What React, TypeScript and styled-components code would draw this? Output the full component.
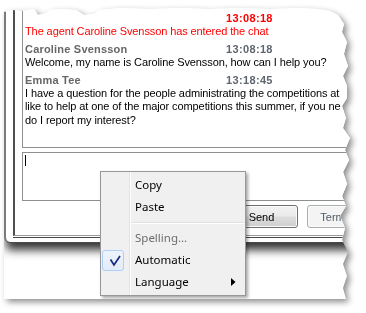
import React from "react";
import styled, { createGlobalStyle } from "styled-components";

const Global = createGlobalStyle`
  html, body { margin: 0; padding: 0; background: #ffffff; }
  body {
    width: 366px; height: 313px; overflow: hidden;
    font-family: "Liberation Sans", Arial, sans-serif;
  }
`;

const Stage = styled.div`
  width: 366px;
  height: 313px;
  background: #ffffff;
`;

const PaperShadow = styled.div`
  width: 356px;
  height: 304px;
  filter: drop-shadow(3px 3px 3px rgba(0, 0, 0, 0.45));
`;

const TORN = [
  "4px 12px", "12px 10px", "22px 11px", "34px 9px", "38px 15px", "46px 13px", "50px 10px",
  "62px 9px", "76px 10px", "84px 15px", "94px 14px", "99px 10px", "120px 8px", "150px 9px",
  "180px 8px", "210px 9px", "240px 8px", "270px 9px", "300px 8px", "318px 9px", "330px 11px",
  "338px 15px", "344px 24px", "342px 32px", "347px 42px", "344px 54px", "348px 66px",
  "343px 76px", "347px 86px", "347px 98px", "342px 106px", "346px 118px", "343px 128px",
  "350px 138px", "345px 150px", "349px 160px", "343px 172px", "347px 184px", "342px 196px",
  "346px 206px", "340px 216px", "345px 228px", "342px 240px", "348px 252px", "343px 264px",
  "347px 276px", "343px 288px", "346px 299px", "4px 299px",
].join(", ");

const Paper = styled.div`
  position: relative;
  box-sizing: border-box;
  width: 352px;
  height: 302px;
  padding-left: 4px;
  background: #ffffff;
  overflow: hidden;
  clip-path: polygon(${TORN});
`;

const Window = styled.div`
  box-sizing: border-box;
  width: 392px;
  margin-top: -8px;
  padding: 0 7px 6px 7px;
  border-left: 2px solid #7a7a7a;
  border-bottom: 1px solid #4a4a4a;
  border-bottom-left-radius: 6px;
  background: #ffffff;
  box-shadow: 0 9px 10px -2px rgba(0, 0, 0, 0.8);
`;

const InnerFrame = styled.div`
  display: flex;
  flex-direction: column;
  padding: 0 7px 7px 7px;
  border-left: 2px solid #4e4e4e;
  border-bottom: 1px solid #9a9a9a;
  box-shadow: 0 1px 0 #ffffff, 0 2px 0 #4a4a4a;
`;

const ChatPanel = styled.div`
  box-sizing: border-box;
  height: 156px;
  padding: 18.5px 2px 0 2px;
  border: 1px solid #8e8f8f;
  overflow: hidden;
  font-size: 11px;
  color: #000000;
`;

const Entry = styled.div`
  margin-bottom: 4.5px;
`;

const Header = styled.div`
  display: grid;
  grid-template-columns: 201px auto;
  height: 13px;
  line-height: 13px;
  font-weight: bold;
`;

const Name = styled.span`
  color: #666666;
  letter-spacing: 0.2px;
`;

const Time = styled.span<{ $system?: boolean }>`
  color: ${(p) => (p.$system ? "#ff0000" : "#5f6670")};
  letter-spacing: 0.35px;
`;

const Line = styled.div<{ $system?: boolean }>`
  height: 13.5px;
  line-height: 13.5px;
  white-space: nowrap;
  letter-spacing: -0.1px;
  color: ${(p) => (p.$system ? "#ff0000" : "#000000")};
`;

const Input = styled.div`
  box-sizing: border-box;
  height: 49px;
  margin-top: 4px;
  padding: 2px 2px;
  border: 1px solid #8e8f8f;
  background: #ffffff;
`;

const Caret = styled.span`
  display: block;
  width: 1px;
  height: 11px;
  background: #000000;
`;

const ButtonRow = styled.div`
  display: flex;
  justify-content: flex-end;
  gap: 9px;
  margin-top: 4px;
`;

const Button = styled.div<{ $disabled?: boolean; $w: number }>`
  box-sizing: border-box;
  width: ${(p) => p.$w}px;
  height: 23px;
  display: flex;
  align-items: center;
  justify-content: center;
  border-radius: 3px;
  font-size: 11px;
  border: 1px solid ${(p) => (p.$disabled ? "#a9aeb1" : "#707070")};
  color: ${(p) => (p.$disabled ? "#505a66" : "#000000")};
  background: ${(p) =>
    p.$disabled
      ? "#f4f4f4"
      : "linear-gradient(#f2f2f2 0%, #ebebeb 48%, #dddddd 52%, #cfcfcf 100%)"};
  box-shadow: inset 0 0 0 1px ${(p) => (p.$disabled ? "#fafafa" : "#fbfbfb")};
`;

const Menu = styled.div`
  position: absolute;
  left: 100px;
  top: 171px;
  box-sizing: border-box;
  width: 146px;
  padding: 2px 0;
  border: 1px solid #979797;
  background: linear-gradient(
    to right,
    #f0f0f0 28px,
    #e2e3e3 28px,
    #e2e3e3 29px,
    #ffffff 29px,
    #ffffff 30px,
    #f0f0f0 30px
  );
  box-shadow: 2px 2px 3px rgba(0, 0, 0, 0.35);
  font-family: "Noto Sans", "Open Sans", sans-serif;
  font-size: 11.5px;
`;

const Item = styled.div<{ $disabled?: boolean }>`
  display: grid;
  grid-template-columns: 28px 1fr 14px;
  align-items: center;
  height: 22px;
  color: ${(p) => (p.$disabled ? "#6d6d6d" : "#000000")};
`;

const Label = styled.span`
  padding-left: 6px;
  line-height: 22px;
`;

const Separator = styled.div`
  height: 9px;
  display: flex;
  align-items: center;
  padding-left: 30px;
  padding-right: 1px;
  &::after {
    content: "";
    flex: 1;
    height: 1px;
    background: #e0e0e0;
    box-shadow: 0 1px 0 #ffffff;
  }
`;

const CheckBox = styled.div`
  box-sizing: border-box;
  width: 22px;
  height: 21px;
  margin-left: 1px;
  border: 1px solid #aecff7;
  border-radius: 3px;
  background: linear-gradient(#eef4fc, #e3ecf9);
  display: flex;
`;

const Arrow = () => (
  <svg width="5" height="8" viewBox="0 0 5 8">
    <path d="M0 0 L4.5 4 L0 8 Z" fill="#000" />
  </svg>
);

const Check = () => (
  <svg width="20" height="19" viewBox="0 0 20 19">
    <path d="M7.5 8.5 L11 14 L17 5" stroke="#1a2a80" strokeWidth="1.7" fill="none" strokeLinejoin="miter" />
  </svg>
);

export default function App() {
  return (
    <Stage>
      <Global />
      <PaperShadow>
        <Paper>
          <Window>
            <InnerFrame>
              <ChatPanel>
                <Entry>
                  <Header>
                    <Name />
                    <Time $system>13:08:18</Time>
                  </Header>
                  <Line $system>The agent Caroline Svensson has entered the chat</Line>
                </Entry>
                <Entry>
                  <Header>
                    <Name>Caroline Svensson</Name>
                    <Time>13:08:18</Time>
                  </Header>
                  <Line>Welcome, my name is Caroline Svensson, how can I help you?</Line>
                </Entry>
                <Entry>
                  <Header>
                    <Name>Emma Tee</Name>
                    <Time>13:18:45</Time>
                  </Header>
                  <Line>I have a question for the people administrating the competitions at</Line>
                  <Line>like to help at one of the major competitions this summer, if you ne</Line>
                  <Line>do I report my interest?</Line>
                </Entry>
              </ChatPanel>
              <Input>
                <Caret />
              </Input>
              <ButtonRow>
                <Button $w={73}>Send</Button>
                <Button $w={75} $disabled>Terminate</Button>
              </ButtonRow>
            </InnerFrame>
          </Window>
          <Menu>
            <Item><span /><Label>Copy</Label><span /></Item>
            <Item><span /><Label>Paste</Label><span /></Item>
            <Separator />
            <Item $disabled><span /><Label>Spelling...</Label><span /></Item>
            <Item>
              <CheckBox><Check /></CheckBox>
              <Label>Automatic</Label>
              <span />
            </Item>
            <Item><span /><Label>Language</Label><Arrow /></Item>
          </Menu>
        </Paper>
      </PaperShadow>
    </Stage>
  );
}
